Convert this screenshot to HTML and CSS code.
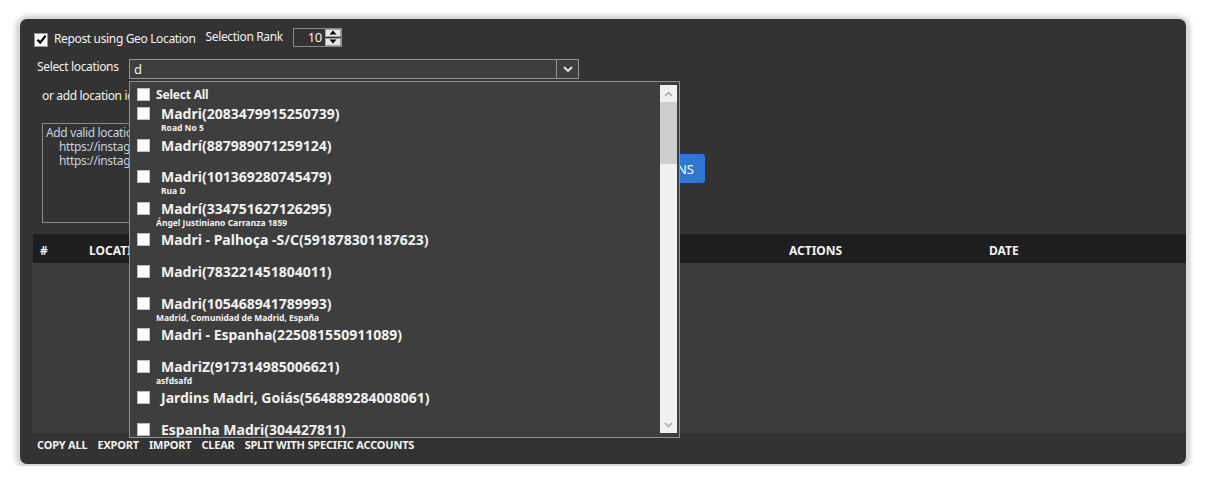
FILE: index.html
```html
<!DOCTYPE html>
<html lang="en">

<head>
    <meta charset="UTF-8">
    <title>Geo Location</title>
    <link rel="stylesheet" href="styles.css">
</head>

<body>
    <div class="page">
        <div class="window">
            <div class="row top">
                <span class="check on">
                    <svg width="11" height="11" viewBox="0 0 11 11"><path d="M1.5 5.8 L4.2 8.6 L9.6 1.8" fill="none" stroke="#000" stroke-width="2.2"/></svg>
                </span>
                <span class="geo">Repost using Geo Location</span>
                <span class="rank">Selection Rank</span>
                <div class="spin">
                    <span class="spin-val">10</span>
                    <div class="spin-btns">
                        <span class="spin-btn"><svg width="8" height="5" viewBox="0 0 8 5"><path d="M0.5 4.5 L4 0.5 L7.5 4.5 Z" fill="#000"/></svg></span>
                        <span class="spin-btn"><svg width="8" height="5" viewBox="0 0 8 5"><path d="M0.5 0.5 L4 4.5 L7.5 0.5 Z" fill="#000"/></svg></span>
                    </div>
                </div>
            </div>

            <div class="row pick">
                <span class="pick-label">Select locations</span>
                <div class="combo">
                    <div class="combo-box">
                        <span class="combo-text">d</span>
                        <span class="combo-btn">
                            <svg width="10" height="6" viewBox="0 0 10 6"><path d="M1 1 L5 5 L9 1" fill="none" stroke="#e8e8e8" stroke-width="1.8"/></svg>
                        </span>
                    </div>

                    <div class="popup">
                        <div class="list">
                            <div class="opt-all"><span class="box"></span><span>Select All</span></div>

                            <div class="opt">
                                <div class="opt-title"><span class="box"></span><span>Madri(2083479915250739)</span></div>
                                <div class="opt-sub">Road No 5</div>
                            </div>
                            <div class="opt">
                                <div class="opt-title"><span class="box"></span><span>Madrí(887989071259124)</span></div>
                                <div class="opt-sub"></div>
                            </div>
                            <div class="opt">
                                <div class="opt-title"><span class="box"></span><span>Madri(101369280745479)</span></div>
                                <div class="opt-sub">Rua D</div>
                            </div>
                            <div class="opt">
                                <div class="opt-title"><span class="box"></span><span>Madrí(334751627126295)</span></div>
                                <div class="opt-sub wide">Ángel Justiniano Carranza 1859</div>
                            </div>
                            <div class="opt">
                                <div class="opt-title"><span class="box"></span><span>Madri - Palhoça -S/C(591878301187623)</span></div>
                                <div class="opt-sub"></div>
                            </div>
                            <div class="opt">
                                <div class="opt-title"><span class="box"></span><span>Madri(783221451804011)</span></div>
                                <div class="opt-sub"></div>
                            </div>
                            <div class="opt">
                                <div class="opt-title"><span class="box"></span><span>Madri(105468941789993)</span></div>
                                <div class="opt-sub wide">Madrid, Comunidad de Madrid, España</div>
                            </div>
                            <div class="opt">
                                <div class="opt-title"><span class="box"></span><span>Madri - Espanha(225081550911089)</span></div>
                                <div class="opt-sub"></div>
                            </div>
                            <div class="opt">
                                <div class="opt-title"><span class="box"></span><span>MadriZ(917314985006621)</span></div>
                                <div class="opt-sub wide">asfdsafd</div>
                            </div>
                            <div class="opt">
                                <div class="opt-title"><span class="box"></span><span>Jardins Madri, Goiás(564889284008061)</span></div>
                                <div class="opt-sub"></div>
                            </div>
                            <div class="opt">
                                <div class="opt-title"><span class="box"></span><span>Espanha Madri(304427811)</span></div>
                                <div class="opt-sub"></div>
                            </div>
                        </div>
                        <div class="scroll">
                            <span class="scroll-arrow">
                                <svg width="9" height="6" viewBox="0 0 9 6"><path d="M1 5 L4.5 1.5 L8 5" fill="none" stroke="#a6a6a6" stroke-width="1.5"/></svg>
                            </span>
                            <span class="scroll-thumb"></span>
                            <span class="scroll-track"></span>
                            <span class="scroll-arrow">
                                <svg width="9" height="6" viewBox="0 0 9 6"><path d="M1 1 L4.5 4.5 L8 1" fill="none" stroke="#a6a6a6" stroke-width="1.5"/></svg>
                            </span>
                        </div>
                    </div>
                </div>
            </div>

            <div class="hint">or add location ids or urls manually</div>

            <div class="row entry">
                <div class="note">
                    <div>Add valid location ids or urls, one per line</div>
                    <div class="note-line">https://instagram.com/explore/locations/...</div>
                    <div class="note-line">https://instagram.com/explore/locations/...</div>
                </div>
                <button class="add">ADD LOCATIONS</button>
            </div>

            <div class="grid-head">
                <span>#</span>
                <span>LOCATION</span>
                <span>ACTIONS</span>
                <span>DATE</span>
            </div>
            <div class="grid-body"></div>

            <div class="actions">
                <span>COPY ALL</span>
                <span>EXPORT</span>
                <span>IMPORT</span>
                <span>CLEAR</span>
                <span>SPLIT WITH SPECIFIC ACCOUNTS</span>
            </div>
        </div>
    </div>
</body>

</html>
```

FILE: styles.css
```css
body {
    margin: 0;
    background-color: #ffffff;
    font-family: "Noto Sans", "Open Sans", sans-serif;
}

.page {
    padding: 17px 0 0 18px;
}

.window {
    width: 1166px;
    height: 445px;
    border: 2px solid #dadada;
    border-radius: 9px;
    background-color: #333333;
    box-shadow: 0 1px 7px rgba(0, 0, 0, 0.35);
    color: #f2f2f2;
    font-size: 12px;
    letter-spacing: -0.35px;
    display: flex;
    flex-direction: column;
    overflow: hidden;
}

.row {
    display: flex;
    align-items: center;
}

/* first line: geo checkbox + rank */
.top {
    height: 20px;
    margin-top: 8px;
    padding-left: 14px;
}

.check {
    width: 12px;
    height: 12px;
    background-color: #ffffff;
    border: 1px solid #9a9a9a;
    display: flex;
    align-items: center;
    justify-content: center;
    margin-top: 5px;
}

.geo {
    margin-left: 6px;
    margin-top: 3px;
}

.rank {
    margin-left: 10px;
    margin-top: -1px;
}

.spin {
    margin-left: 10px;
    width: 47px;
    height: 17px;
    border: 1px solid #8a8a8a;
    display: flex;
}

.spin-val {
    flex: 1;
    text-align: right;
    padding-right: 3px;
    line-height: 17px;
    font-size: 13px;
}

.spin-btns {
    width: 16px;
    display: flex;
    flex-direction: column;
    gap: 1px;
}

.spin-btn {
    flex: 1;
    background-color: #e6e6e6;
    border: 1px solid #a0a0a0;
    display: flex;
    align-items: center;
    justify-content: center;
}

/* location picker */
.pick {
    margin-top: 12px;
    padding-left: 17px;
}

.pick-label {
    width: 92px;
    margin-top: -5px;
}

.combo {
    position: relative;
}

.combo-box {
    width: 448px;
    height: 18px;
    border: 1px solid #8e989c;
    background-color: #3e3e3e;
    display: flex;
}

.combo-text {
    flex: 1;
    padding-left: 4px;
    line-height: 18px;
    font-size: 13px;
}

.combo-btn {
    width: 21px;
    border-left: 1px solid #8e989c;
    display: flex;
    align-items: center;
    justify-content: center;
}

.popup {
    position: absolute;
    top: 22px;
    left: 0;
    z-index: 5;
    width: 549px;
    height: 355px;
    border: 1px solid #8f8f8f;
    background-color: #3e3e3e;
    display: flex;
    letter-spacing: 0;
}

.list {
    flex: 1;
    overflow: hidden;
    padding: 2px 0 0 7px;
    font-weight: 700;
}

.box {
    width: 11px;
    height: 11px;
    background-color: #ffffff;
    border: 1px solid #bdbdbd;
    flex-shrink: 0;
}

.opt-all {
    height: 21px;
    display: flex;
    align-items: center;
    gap: 6px;
    letter-spacing: -0.2px;
}

.opt {
    height: 31.6px;
}

.opt-title {
    height: 17px;
    display: flex;
    align-items: center;
    gap: 11px;
    font-size: 14px;
}

.opt-sub {
    font-size: 8.5px;
    line-height: 11px;
    height: 11px;
    padding-left: 24px;
}

.opt-sub.wide {
    padding-left: 19px;
}

.scroll {
    width: 17px;
    margin: 3px 2px 4px 0;
    background-color: #f0f0f0;
    display: flex;
    flex-direction: column;
}

.scroll-arrow {
    height: 17px;
    display: flex;
    align-items: center;
    justify-content: center;
}

.scroll-thumb {
    height: 62px;
    background-color: #cdcdcd;
}

.scroll-track {
    flex: 1;
}

.hint {
    margin-top: 9px;
    padding-left: 22px;
    line-height: 16px;
}

/* manual entry */
.entry {
    margin-top: 19px;
    padding-left: 22px;
    align-items: flex-start;
}

.note {
    width: 520px;
    height: 100px;
    box-sizing: border-box;
    border: 1px solid #8a8a8a;
    padding: 2px 3px;
    color: #c3d2e3;
    line-height: 14px;
}

.note-line {
    padding-left: 13px;
}

.add {
    margin-left: 23px;
    margin-top: 31px;
    width: 120px;
    height: 29px;
    border: none;
    border-radius: 3px;
    background-color: #2f78d1;
    color: #ffffff;
    font-family: inherit;
    font-size: 13px;
    text-align: right;
    padding-right: 11px;
}

/* locations table */
.grid-head {
    margin-top: 11px;
    margin-left: 13px;
    height: 29px;
    box-sizing: border-box;
    padding-top: 3px;
    background-color: #1e1e1e;
    display: grid;
    grid-template-columns: 49px 700px 200px 1fr;
    align-items: center;
    padding-left: 7px;
    font-weight: 700;
    letter-spacing: 0;
}

.grid-body {
    margin-left: 12px;
    height: 170px;
    background-color: #3d3d3d;
}

.actions {
    height: 22px;
    display: flex;
    align-items: center;
    gap: 10px;
    padding-left: 17px;
    font-size: 11px;
    font-weight: 700;
    letter-spacing: -0.2px;
}
```
